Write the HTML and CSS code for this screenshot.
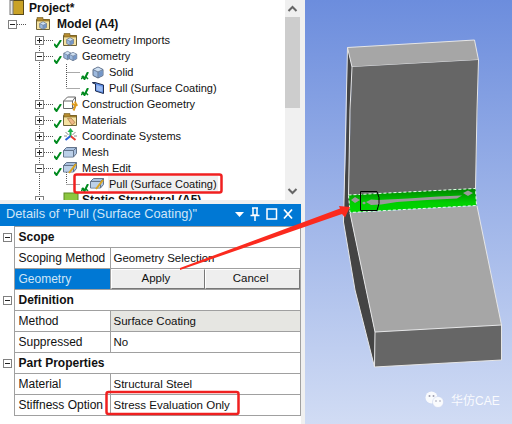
FILE: index.html
```html
<!DOCTYPE html>
<html>
<head>
    <title>Pull (Surface Coating)</title>
    <link rel="stylesheet" href="styles.css">
</head>
<body>
    <svg class="defs" width="0" height="0">
        <defs>
            <g id="cube">
                <path d="M1 3 6 .5 11 3v6l-5 2.500L1 9z" fill="#9db9de" stroke="#5b6c86"/>
                <path d="M1.500 3.200 6 1l4.500 2.200L6 5.500z" fill="#cfe0f2"/>
                <path d="M6.500 6l4-2v4.700l-4 2z" fill="#7396c8"/>
                <path d="M1 3l5 2.500L11 3M6 5.500v6" fill="none" stroke="#5b6c86" stroke-width=".8"/>
            </g>
            <g id="box">
                <path d="M.5 3.500 3.500.5h10v6l-3 3.500H.5z" fill="#a9c0de" stroke="#63748c"/>
                <path d="M1 4h9v5.500H1z" fill="#bcd0e8"/>
                <path d="M.5 3.500h10V10M10.500 3.500l3-3" fill="none" stroke="#63748c"/>
            </g>
            <g id="folder">
                <path d="M.5 3.500h13v10H.5z" fill="#f5e2a0" stroke="#6e6238"/>
                <path d="M1 1.500h6v2h6.500V5H1z" fill="#b58a2e" stroke="#6e5a20" stroke-width=".6"/>
            </g>
            <g id="check">
                <path d="M0 4l2.500 3L7 0" fill="none" stroke="#008a1e" stroke-width="2"/>
            </g>
            <g id="checkx">
                <path d="M1 4l2.500 3L7 0" fill="none" stroke="#008a1e" stroke-width="2"/>
                <path d="M0 7l3-3M4.500 4.500l2.500 2.500" stroke="#008a1e" stroke-width="1.500"/>
            </g>
        </defs>
    </svg>

    <div class="page">
        <div class="left">
            <div class="outline">
                <div class="tree">
                    <svg class="dots" width="285" height="200">
                        <path d="M17 24.500h10M44 40.500h10M44 56.500h10M44 104.500h10M44 120.500h10M44 136.500h10M44 152.500h10M44 168.500h10M66.500 64v24M66.500 72.500h14M66.500 88.500h14M66.500 172v12M66.500 184.500h14M39.500 44v156" fill="none" stroke="#555" stroke-dasharray="1 1"/>
                    </svg>
                    <div class="row root">
                        <svg class="ic" width="16" height="16"><rect x="1.500" y=".5" width="13" height="14" fill="#c9a227" stroke="#5a4a18"/><rect x="1" y=".5" width="3" height="14" fill="#e8e8e8" stroke="#777"/></svg>
                        <span class="lbl bold">Project*</span>
                    </div>
                    <div class="row lv1">
                        <span class="exp minus"></span>
                        <svg class="ic" width="16" height="16"><use href="#folder"/><use href="#cube" transform="translate(3 5.500) scale(.68)"/></svg>
                        <span class="lbl bold">Model (A4)</span>
                    </div>
                    <div class="row lv2">
                        <span class="exp plus"></span>
                        <svg class="chk" width="8" height="8"><use href="#check"/></svg>
                        <svg class="ic" width="16" height="16"><use href="#folder"/><use href="#cube" transform="translate(3 5.500) scale(.68)"/></svg>
                        <span class="lbl">Geometry Imports</span>
                    </div>
                    <div class="row lv2">
                        <span class="exp minus"></span>
                        <svg class="chk" width="8" height="8"><use href="#check"/></svg>
                        <svg class="ic" width="16" height="16"><use href="#cube" transform="translate(0 3) scale(.75)"/><use href="#cube" transform="translate(5.500 4) scale(.75)"/></svg>
                        <span class="lbl">Geometry</span>
                    </div>
                    <div class="row lv3">
                        <svg class="chk" width="8" height="8"><use href="#checkx"/></svg>
                        <svg class="ic" width="16" height="16"><use href="#cube" transform="translate(2 2.500)"/></svg>
                        <span class="lbl">Solid</span>
                    </div>
                    <div class="row lv3">
                        <svg class="chk" width="8" height="8"><use href="#checkx"/></svg>
                        <svg class="ic" width="16" height="16"><path d="M2.500 3V2.500h2.500L13.500 5v8.500L5.500 11V4z" fill="#5f8fe6" stroke="#1f2d50"/><path d="M6.500 5l6 1.800v5L6.500 10z" fill="#9cbcf2"/></svg>
                        <span class="lbl">Pull (Surface Coating)</span>
                    </div>
                    <div class="row lv2">
                        <span class="exp plus"></span>
                        <svg class="chk" width="8" height="8"><use href="#check"/></svg>
                        <svg class="ic" width="16" height="16"><path d="M.5 5 4.500 1h8v8l-3 3.500H.5zM.5 5h9v7.500M9.500 5l3-4" fill="#fff" stroke="#6a6a6a"/><path d="M12 5.500l1 3-2.500 6M9 7.500l3.500 2 2-1" fill="none" stroke="#dd9a1c" stroke-width="2"/></svg>
                        <span class="lbl">Construction Geometry</span>
                    </div>
                    <div class="row lv2">
                        <span class="exp plus"></span>
                        <svg class="chk" width="8" height="8"><use href="#check"/></svg>
                        <svg class="ic" width="16" height="16"><use href="#folder"/><path d="M4.500 6.500l3.500-.5 4 4.500-3 2.500z" fill="#eeb98a" stroke="#ac7d4a" stroke-width=".8"/></svg>
                        <span class="lbl">Materials</span>
                    </div>
                    <div class="row lv2">
                        <span class="exp plus"></span>
                        <svg class="chk" width="8" height="8"><use href="#check"/></svg>
                        <svg class="ic" width="16" height="16"><path d="M2.500 4l3 3M12.500 4l-3 3M1 8h3M14 8h-3" stroke="#8a8a8a"/><path d="M7.500 8V3" stroke="#1bb04a" stroke-width="2"/><path d="M7.500 0l3 4h-6z" fill="#1bb04a"/><path d="M7.500 8l5 4" stroke="#e23b2e" stroke-width="2"/><path d="M7.500 8l-5 4" stroke="#2a63d8" stroke-width="2"/></svg>
                        <span class="lbl">Coordinate Systems</span>
                    </div>
                    <div class="row lv2">
                        <span class="exp plus"></span>
                        <svg class="chk" width="8" height="8"><use href="#check"/></svg>
                        <svg class="ic" width="16" height="16"><use href="#box" transform="translate(0 3)"/></svg>
                        <span class="lbl">Mesh</span>
                    </div>
                    <div class="row lv2">
                        <span class="exp minus"></span>
                        <svg class="chk" width="8" height="8"><use href="#check"/></svg>
                        <svg class="ic" width="16" height="16"><use href="#box" transform="translate(0 2)"/><path d="M6 13l7-9" stroke="#dba520" stroke-width="2"/></svg>
                        <span class="lbl">Mesh Edit</span>
                    </div>
                    <div class="row lv3">
                        <svg class="chk" width="8" height="8"><use href="#checkx"/></svg>
                        <svg class="ic" width="16" height="16"><use href="#box" transform="translate(0 2)"/><path d="M6 13l7-9" stroke="#dba520" stroke-width="2"/></svg>
                        <span class="lbl selected">Pull (Surface Coating)</span>
                    </div>
                    <div class="row lv2">
                        <span class="exp plus"></span>
                        <span class="chk"></span>
                        <svg class="ic" width="16" height="16"><rect x="1" y="1" width="14" height="13" fill="#8cc63f" stroke="#5c8a22"/></svg>
                        <span class="lbl bold">Static Structural (A5)</span>
                    </div>
                </div>
                <div class="scrollbar">
                    <svg width="15" height="17"><path d="M3.500 11l4-4 4 4" fill="none" stroke="#666" stroke-width="2"/></svg>
                    <div class="thumb"></div>
                    <svg class="down" width="15" height="17"><path d="M3.500 6l4 4 4-4" fill="none" stroke="#666" stroke-width="2"/></svg>
                </div>
            </div>

            <div class="details">
                <div class="titlebar">
                    <span class="title">Details of "Pull (Surface Coating)"</span>
                    <span class="gripper"></span>
                    <svg class="title-ic" width="58" height="14" viewBox="0 0 58 14">
                        <path d="M0 5h9l-4.500 5z" fill="#fff"/>
                        <path d="M17 1h6M18 1v7h4V1M15.500 8.500h9M20 9v5" fill="none" stroke="#fff" stroke-width="1.500"/>
                        <rect x="32" y="2" width="9.500" height="10" fill="none" stroke="#fff" stroke-width="1.500"/>
                        <path d="M49 2.500l8 9M57 2.500l-8 9" stroke="#fff" stroke-width="1.800"/>
                    </svg>
                </div>
                <table class="props">
                    <colgroup><col class="c-exp"><col class="c-name"><col></colgroup>
                    <tr class="group"><td class="gutter"><span class="exp minus"></span></td><td colspan="2">Scope</td></tr>
                    <tr><td class="gutter"></td><td>Scoping Method</td><td class="val">Geometry Selection</td></tr>
                    <tr>
                        <td class="gutter"></td>
                        <td class="active">Geometry</td>
                        <td class="btn-cell"><div class="btns"><button>Apply</button><button>Cancel</button></div></td>
                    </tr>
                    <tr class="group"><td class="gutter"><span class="exp minus"></span></td><td colspan="2">Definition</td></tr>
                    <tr><td class="gutter"></td><td>Method</td><td class="val readonly">Surface Coating</td></tr>
                    <tr><td class="gutter"></td><td>Suppressed</td><td class="val">No</td></tr>
                    <tr class="group"><td class="gutter"><span class="exp minus"></span></td><td colspan="2">Part Properties</td></tr>
                    <tr><td class="gutter"></td><td>Material</td><td class="val">Structural Steel</td></tr>
                    <tr><td class="gutter"></td><td>Stiffness Option</td><td class="val">Stress Evaluation Only</td></tr>
                </table>
            </div>
        </div>

        <div class="viewport">
            <svg class="model" width="207" height="424" viewBox="305 0 207 424">
                <defs>
                    <linearGradient id="band" x1="0" y1="0" x2="0" y2="1">
                        <stop offset="0" stop-color="#008000"/>
                        <stop offset=".35" stop-color="#00b000"/>
                        <stop offset=".6" stop-color="#00d000"/>
                        <stop offset="1" stop-color="#00d400"/>
                    </linearGradient>
                </defs>
                <path d="M347.500 47.500 352 67 348.500 195 350 213 375 332 374.500 367 355 290 343.500 222 344 200 346 150 346.500 113z" fill="#444"/>
                <path d="M347.500 47.500 474.500 40 478.500 60 352 67z" fill="#a6a6a6" stroke="#e6e6e6"/>
                <path d="M352 67 478.500 60 475.500 188.500 348.500 195z" fill="#666"/>
                <path d="M350 213 477 206 501.500 325 375 332z" fill="#a6a6a6"/>
                <path d="M375 332 501.500 325V360L374.500 367z" fill="#666"/>
                <path d="M375 332 501.500 325 477 206M375 332 374.500 367 501.500 360V325M352 67 350 110 348.500 195M478.500 60 477 110 475.500 188.500M350 213 375 332M347.500 47.500 346 113 344 200 343.500 222 355 290 374.500 367" fill="none" stroke="#e6e6e6"/>
                <path d="M348.500 195 475.500 188.500 476.500 205.500 350 212.500z" fill="url(#band)" stroke="#e8ffe8" stroke-dasharray="3 2"/>
                <path d="M351 200l4-3 5 3-5 3zM362 203l2-1.500 2 1.500-2 1.500zM366 202l5-2.500 7 .5 30-1.500 30-2 24-1-5 3-30 1.500-30 2-16 2.500-10 .5zM463 193l5-2.500 5 2.500-5 3z" fill="#9a9a9a"/>
                <path d="M360.500 191.500h16.500l2 6v6l-2 7h-16.500z" fill="none" stroke="#000"/>
            </svg>
            <div class="watermark">
                <svg width="19" height="17" viewBox="0 0 19 17"><circle cx="6.500" cy="6.500" r="6" fill="#fff"/><circle cx="13" cy="11" r="5.500" fill="#fff" stroke="#c4cfec" stroke-width=".5"/><circle cx="4.500" cy="5" r="1" fill="#99a"/><circle cx="8.500" cy="5" r="1" fill="#99a"/><circle cx="11" cy="10" r=".8" fill="#99a"/><circle cx="15" cy="10" r=".8" fill="#99a"/></svg>
                <span>华仿CAE</span>
            </div>
        </div>

        <svg class="marks" width="512" height="424">
            <rect x="74.500" y="174.500" width="147" height="18" rx="2" fill="none" stroke="#f02020" stroke-width="2.500"/>
            <rect x="106.500" y="392" width="132" height="22" rx="2" fill="none" stroke="#f02020" stroke-width="2.500"/>
            <path d="M180 268 340 208.500 339 206 350 207 345 217.500 342 214 180 270z" fill="#fb2a1e"/>
        </svg>
    </div>
</body>
</html>
```

FILE: styles.css
```css
body { margin: 0; font-family: "Liberation Sans", Arial, sans-serif; font-size: 12px; color: #111; }
.defs { position: absolute; }
.page { position: relative; display: flex; width: 512px; height: 424px; overflow: hidden; }

.left { width: 301px; padding-right: 4px; background-color: #f0f0f0; display: flex; flex-direction: column; }
.outline { display: flex; height: 200px; }

.tree { position: relative; width: 285px; height: 200px; overflow: hidden; background-color: #fff; font-size: 11px; }
.dots { position: absolute; left: 0; top: 0; }
.row { position: relative; display: flex; align-items: center; height: 16px; white-space: nowrap; }
.row.root { padding-left: 9px; }
.row.lv1 { padding-left: 8px; }
.row.lv2 { padding-left: 35px; }
.row.lv3 { padding-left: 81px; }
.row .ic { flex: none; margin-right: 3px; }
.row.lv1 .ic { margin-left: 19px; margin-right: 4px; }
.row.lv2 .ic { margin-left: 1px; margin-right: 2px; }
.row.lv3 .ic { margin-left: 1px; margin-right: 2px; }
.row .chk { flex: none; width: 8px; height: 8px; margin-top: 8px; }
.row.lv2 .chk { margin-left: 10px; }
.lbl { padding: 0 1px; line-height: 16px; background-color: #fff; }
.lbl.selected { background-color: #f0f0f0; }
.bold { font-weight: bold; font-size: 12px; }

.exp { position: relative; flex: none; box-sizing: border-box; display: block; width: 9px; height: 9px; border: 1px solid #808080; background-color: #fff; }
.exp::before { content: ""; position: absolute; left: 1px; top: 3px; width: 5px; height: 1px; background-color: #222; }
.exp.plus::after { content: ""; position: absolute; left: 3px; top: 1px; width: 1px; height: 5px; background-color: #222; }

.scrollbar { position: relative; width: 15px; background-color: #f0f0f0; }
.scrollbar svg { display: block; }
.thumb { height: 91px; background-color: #cdcdcd; }
.scrollbar .down { position: absolute; bottom: 0; left: 0; }

.details { flex: 1; margin-top: 4px; background-color: #fff; }
.titlebar { display: flex; align-items: center; box-sizing: border-box; height: 22px; padding: 0 0 3px 6px; background-color: #0078d4; color: #cfe6f7; }
.title { font-size: 12.8px; white-space: nowrap; }
.gripper { width: 29px; height: 6px; margin-left: 5px; background-image: radial-gradient(#7fbde8 0.6px, transparent 0.7px); background-size: 2px 2px; }
.title-ic { margin-left: 4px; }

.props { width: 301px; table-layout: fixed; border-collapse: collapse; }
.c-exp { width: 14px; }
.c-name { width: 96px; }
.props td { box-sizing: border-box; height: 21px; padding: 0 3px 1px 4px; border: 1px solid #a0a0a0; white-space: nowrap; overflow: hidden; }
.props td.gutter { padding: 0 0 0 3px; border: none; border-right: 1px solid #a0a0a0; }
.props td.val { padding-left: 3px; font-size: 11.5px; }
.group td { font-weight: bold; font-size: 12px; }
.props td.active { background-color: #0078d4; color: #cfe6f7; }
.props td.readonly { background-color: #e6e6e2; }
.props td.btn-cell { padding: 0; }
.btns { display: flex; height: 20px; }
.btns button { flex: 1; margin: 0; padding: 0 4px 2px 0; font: inherit; font-size: 11.5px; color: #111; background-color: #eee; border: 1px solid #fff; border-right-color: #777; border-bottom-color: #777; }

.viewport { position: relative; flex: 1; background: linear-gradient(#6c8ddd, #d1dcf4); }
.model { position: absolute; left: 0; top: 0; }
.watermark { position: absolute; left: 120px; top: 391px; display: flex; align-items: center; gap: 7px; color: #fff; font-size: 12px; font-family: "Liberation Sans", "Noto Sans CJK SC", sans-serif; opacity: .9; }
.marks { position: absolute; left: 0; top: 0; pointer-events: none; }
```
